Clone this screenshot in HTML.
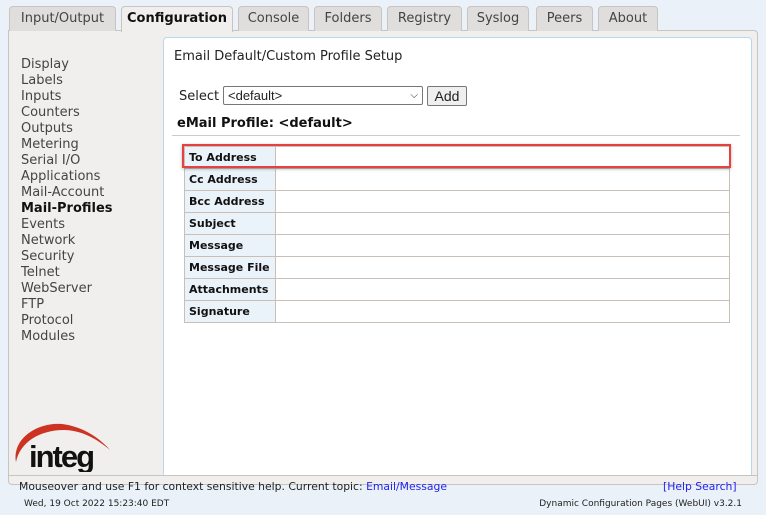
<!DOCTYPE html>
<html><head><style>
*{box-sizing:border-box}
body{margin:0;width:766px;height:515px;background:#eaf1f8;font-family:"DejaVu Sans","Liberation Sans",sans-serif;font-size:12.5px;color:#222;position:relative;overflow:hidden}
.tab{position:absolute;top:6px;height:25px;background:#e0dddd;border:1px solid #c8c4c0;border-bottom:none;border-radius:4px 4px 0 0;text-align:center;line-height:24px;font-size:13px;color:#444}
.tab.act{background:#f0efed;color:#111;font-weight:bold;height:26px}
.outer{position:absolute;left:8px;top:30px;width:750px;height:455px;background:#f0efed;border:1px solid #c8c4c0;border-radius:0 4px 4px 4px}
.content{position:absolute;left:163px;top:37px;width:589px;height:439px;background:#fff;border:1px solid #b8d8ec;border-radius:4px 4px 0 0}
.nav{position:absolute;left:21px;top:57px;line-height:16px;font-size:13px;color:#444}
.nav b{color:#111}
table{position:absolute;left:184px;top:146px;width:546px;border-collapse:collapse}
td{border:1px solid #c8c0b8;height:22px;padding:0 4px;font-weight:bold;font-size:11px;color:#111;white-space:nowrap}
td.l{background:#eaf2fa;width:91px}
</style></head><body>
<div class="outer"></div>
<div class="tab" style="left:9px;width:107px">Input/Output</div>
<div class="tab act" style="left:121px;width:112px">Configuration</div>
<div class="tab" style="left:238px;width:71px">Console</div>
<div class="tab" style="left:314px;width:68px">Folders</div>
<div class="tab" style="left:387px;width:75px">Registry</div>
<div class="tab" style="left:467px;width:62px">Syslog</div>
<div class="tab" style="left:536px;width:57px">Peers</div>
<div class="tab" style="left:598px;width:60px">About</div>
<div class="content"></div>
<div class="nav">Display<br>Labels<br>Inputs<br>Counters<br>Outputs<br>Metering<br>Serial I/O<br>Applications<br>Mail-Account<br><b>Mail-Profiles</b><br>Events<br>Network<br>Security<br>Telnet<br>WebServer<br>FTP<br>Protocol<br>Modules</div>
<div style="position:absolute;left:174px;top:49px;font-size:13px">Email Default/Custom Profile Setup</div>
<div style="position:absolute;left:179px;top:89px;font-size:13px">Select</div>
<div style="position:absolute;left:223px;top:86px;width:200px;height:19px;border:1px solid #777;border-radius:2px;line-height:17px;padding-left:4px;font-family:'Liberation Sans',sans-serif;font-size:13px">&lt;default&gt;<span style="position:absolute;right:4px;top:0;font-size:10px">&#9013;</span></div>
<div style="position:absolute;left:427px;top:86px;width:40px;height:20px;border:1px solid #777;border-radius:2px;background:#efefef;text-align:center;line-height:18px;font-family:'Liberation Sans',sans-serif;font-size:14px">Add</div>
<div style="position:absolute;left:177px;top:116px;font-weight:bold;font-size:13px;color:#111">eMail Profile: &lt;default&gt;</div>
<div style="position:absolute;left:172px;top:135px;width:568px;height:1px;background:#ccc"></div>
<table>
<tr><td class="l">To Address</td><td></td></tr>
<tr><td class="l">Cc Address</td><td></td></tr>
<tr><td class="l">Bcc Address</td><td></td></tr>
<tr><td class="l">Subject</td><td></td></tr>
<tr><td class="l">Message</td><td></td></tr>
<tr><td class="l">Message File</td><td></td></tr>
<tr><td class="l">Attachments</td><td></td></tr>
<tr><td class="l">Signature</td><td></td></tr>
</table>
<div style="position:absolute;left:182px;top:144px;width:549px;height:24px;border:2px solid #e84040;box-shadow:0 1px 3px rgba(0,0,0,.3)"></div>
<svg style="position:absolute;left:10px;top:418px" width="110" height="54">
<path d="M6 44 C2 20 28 4 52 6 C70 8 88 18 100 32 C86 20 70 12 54 12 C30 12 10 24 6 44Z" fill="#cc3322"/>
<text x="19" y="49" font-family="Liberation Sans,sans-serif" font-weight="bold" font-size="31" fill="#111" letter-spacing="-2">integ</text>
</svg>
<div style="position:absolute;left:9px;top:475px;width:748px;height:1px;background:#c8c4c0"></div>
<div style="position:absolute;left:19px;top:480px;font-size:10.8px;color:#222">Mouseover and use F1 for context sensitive help. Current topic: <span style="color:#22e">Email/Message</span></div>
<div style="position:absolute;left:663px;top:480px;font-size:10.8px;color:#22e">[Help Search]</div>
<div style="position:absolute;left:24px;top:499px;font-size:9px;color:#222">Wed, 19 Oct 2022 15:23:40 EDT</div>
<div style="position:absolute;right:24px;top:499px;font-size:9px;color:#222">Dynamic Configuration Pages (WebUI) v3.2.1</div>
</body></html>
